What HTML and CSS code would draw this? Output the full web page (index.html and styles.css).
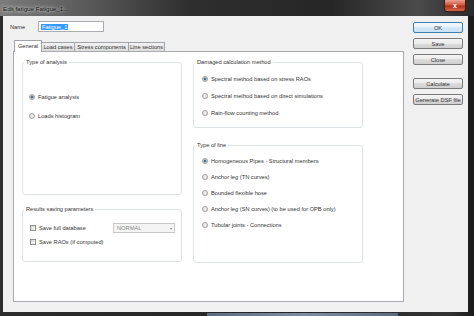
FILE: index.html
```html
<!DOCTYPE html>
<html lang="en">
<head>
  <meta charset="UTF-8">
  <title>Edit fatigue</title>
  <link rel="stylesheet" href="styles.css">
</head>
<body>
  <div class="window">
    <div class="titlebar">
      <div class="title">Edit fatigue Fatigue_1...</div>
      <div class="close-btn">x</div>
    </div>

    <div class="client">
      <div class="left">
        <div class="name-row">
          <label>Name</label>
          <div class="name-input"><span class="sel">Fatigue_1</span></div>
        </div>

        <div class="tabs">
          <div class="tab active tab-general">General</div>
          <div class="tab tab-load">Load cases</div>
          <div class="tab tab-stress">Stress components</div>
          <div class="tab tab-line">Line sections</div>
        </div>

        <div class="panel">
          <div class="col">
            <fieldset class="box box-analysis">
              <legend>Type of analysis</legend>
              <div class="opts">
                <div class="opt"><span class="radio checked"></span>Fatigue analysis</div>
                <div class="opt"><span class="radio"></span>Loads histogram</div>
              </div>
            </fieldset>

            <fieldset class="box box-results">
              <legend>Results saving parameters</legend>
              <div class="opts">
                <div class="opt">
                  <span class="check"></span>Save full database
                  <div class="combo"><span>NORMAL</span><span class="arrow">&#9662;</span></div>
                </div>
                <div class="opt"><span class="check"></span>Save RAOs (if computed)</div>
              </div>
            </fieldset>
          </div>

          <div class="col">
            <fieldset class="box box-damage">
              <legend>Damaged calculation method</legend>
              <div class="opts">
                <div class="opt"><span class="radio checked"></span>Spectral method based on stress RAOs</div>
                <div class="opt"><span class="radio"></span>Spectral method based on direct simulations</div>
                <div class="opt"><span class="radio"></span>Rain-flow counting method</div>
              </div>
            </fieldset>

            <fieldset class="box box-line">
              <legend>Type of line</legend>
              <div class="opts">
                <div class="opt"><span class="radio checked"></span>Homogeneous Pipes - Structural members</div>
                <div class="opt"><span class="radio"></span>Anchor leg (TN curves)</div>
                <div class="opt"><span class="radio"></span>Bounded flexible hose</div>
                <div class="opt"><span class="radio"></span>Anchor leg (SN curves) (to be used for OPB only)</div>
                <div class="opt"><span class="radio"></span>Tubular joints - Connections</div>
              </div>
            </fieldset>
          </div>
        </div>
      </div>

      <div class="actions">
        <button class="default">OK</button>
        <button>Save</button>
        <button>Close</button>
        <button class="spaced">Calculate</button>
        <button>Generate DSF file</button>
      </div>
    </div>

    <div class="bottom-strip"><div class="desk"></div></div>
  </div>
</body>
</html>
```

FILE: styles.css
```css
html, body {
  margin: 0;
  padding: 0;
  background: #1c1c1c;
}
.window {
  width: 474px;
  height: 316px;
  overflow: hidden;
  display: flex;
  flex-direction: column;
  background: linear-gradient(90deg, #2c2c2c, #252525 60%, #333 95%, #1a1a1a);
  font-family: "Liberation Sans", Arial, sans-serif;
  font-size: 5.7px;
  color: #333;
}
.titlebar {
  height: 16px;
  display: flex;
  justify-content: space-between;
  align-items: flex-start;
  background: linear-gradient(90deg, #7c7c7c, #5a5a5a 18%, #2e2e2e 40%, #262626 70%, #4c4c4c 88%, #2a2a2a);
}
.title {
  padding: 5px 0 0 3px;
  font-size: 6.2px;
  color: #111;
  text-shadow: 0 0 3px rgba(255, 255, 255, 0.9), 0 0 5px rgba(255, 255, 255, 0.6);
}
.close-btn {
  width: 22px;
  height: 12px;
  margin-right: 8px;
  box-sizing: border-box;
  border: 1px solid #4a1810;
  border-top: none;
  border-radius: 0 0 3px 3px;
  background: linear-gradient(#e9a394, #d0563f 45%, #b3301b 55%, #cf6a4e);
  color: #fff;
  font-size: 7px;
  font-weight: bold;
  text-align: center;
  line-height: 11px;
}
.client {
  height: 296px;
  margin: 0 6px 0 3px;
  background: #f0f0f0;
  display: flex;
}
.left {
  width: 401px;
  display: flex;
  flex-direction: column;
}
.name-row {
  display: flex;
  align-items: center;
  height: 11px;
  margin: 5px 0 0 7px;
}
.name-row label {
  width: 28px;
}
.name-input {
  width: 66px;
  height: 11px;
  box-sizing: border-box;
  border: 1px solid #abadb3;
  background: #fff;
  display: flex;
  align-items: center;
  padding-left: 2px;
}
.sel {
  background: #3399ff;
  color: #fff;
  padding: 0 1px;
}
.tabs {
  display: flex;
  align-items: flex-end;
  height: 11px;
  margin: 8px 0 0 11px;
  position: relative;
  z-index: 1;
}
.tab {
  height: 9px;
  box-sizing: border-box;
  border: 1px solid #a0a4aa;
  border-bottom: none;
  margin-right: -1px;
  border-radius: 1px 1px 0 0;
  background: linear-gradient(#f3f3f3, #e8e8e8 50%, #dcdcdc);
  text-align: center;
  line-height: 8px;
}
.tab.active {
  height: 12px;
  margin-bottom: -1px;
  background: #fff;
  line-height: 10px;
}
.tab-general { width: 28px; }
.tab-load { width: 34px; }
.tab-stress { width: 55px; }
.tab-line { width: 37px; }
.panel {
  margin-left: 10px;
  width: 391px;
  height: 251px;
  box-sizing: border-box;
  border: 1px solid #a7abb1;
  background: #fff;
  padding: 6px 0 0 8px;
  display: grid;
  grid-template-columns: 160px 170px;
  column-gap: 11px;
  align-items: start;
}
.col {
  display: flex;
  flex-direction: column;
}
.box {
  margin: 0;
  padding: 0;
  min-width: 0;
  box-sizing: border-box;
  border: 1px solid #dde3e7;
  border-radius: 3px;
}
.box legend {
  padding: 0 2px;
  margin-left: 1px;
  line-height: 8px;
  height: 8px;
}
.opt {
  display: flex;
  align-items: center;
}
.box-analysis { height: 137px; }
.box-analysis .opts { padding: 21px 0 0 6px; }
.box-analysis .opt { height: 19px; }
.box-results { height: 57px; margin-top: 10px; }
.box-results .opts { padding: 8px 0 0 7px; }
.box-results .opt { height: 14px; }
.box-damage { height: 70px; }
.box-damage .opts { padding: 4px 0 0 8px; }
.box-damage .opt { height: 17px; }
.box-line { height: 122px; margin-top: 13px; }
.box-line .opts { padding: 4px 0 0 8px; }
.box-line .opt { height: 16px; }
.radio {
  width: 6px;
  height: 6px;
  box-sizing: border-box;
  border: 1px solid #a2a2a2;
  border-radius: 50%;
  background: radial-gradient(circle, #f4f4f4, #d8d8d8);
  margin-right: 3px;
}
.radio.checked {
  background: radial-gradient(circle, #7595bd 0, #34557f 45%, #d8d8d8 60%);
}
.check {
  width: 6px;
  height: 6px;
  box-sizing: border-box;
  border: 1px solid #8f8f8f;
  background: linear-gradient(135deg, #d8d8d8, #f8f8f8);
  margin-right: 3px;
}
.combo {
  margin-left: auto;
  margin-right: 6px;
  width: 62px;
  height: 10px;
  box-sizing: border-box;
  border: 1px solid #c8c8c8;
  background: #f4f4f4;
  color: #8a8a8a;
  display: flex;
  justify-content: space-between;
  align-items: center;
  padding: 0 2px 0 3px;
}
.combo .arrow {
  font-size: 4px;
}
.actions {
  width: 50px;
  margin: 6px 0 0 9px;
  display: flex;
  flex-direction: column;
  gap: 5px;
}
.actions button {
  height: 11px;
  padding: 0;
  box-sizing: border-box;
  border: 1px solid #7a7a7a;
  border-radius: 2px;
  background: linear-gradient(#f4f4f4, #ebebeb 50%, #dddddd 50%, #cfcfcf);
  font-family: inherit;
  font-size: 5.7px;
  color: #333;
}
.actions button.default {
  border-color: #3c7fb1;
  background: linear-gradient(#f3f9fd, #e6f2fa 50%, #d6e9f6 50%, #c9e1f2);
}
.actions button.spaced {
  margin-top: 8px;
}
.bottom-strip {
  flex: 1;
  display: flex;
  padding-left: 207px;
}
.desk {
  width: 191px;
  margin-top: 1px;
  background: linear-gradient(90deg, #5a6b80, #7d8ea3 50%, #5a6b80);
}
```
